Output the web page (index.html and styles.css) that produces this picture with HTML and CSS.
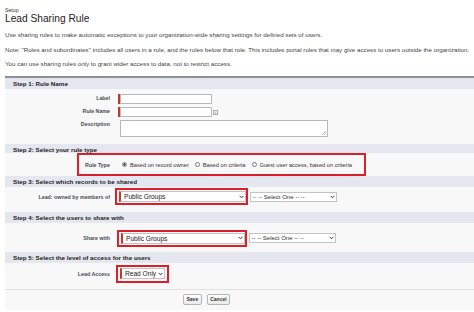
FILE: index.html
```html
<!DOCTYPE html>
<html>
<head>
<meta charset="utf-8">
<title>Lead Sharing Rule</title>
<link rel="stylesheet" href="styles.css">
</head>
<body>
<div class="crumb">Setup</div>
<h1 class="title">Lead Sharing Rule</h1>
<p class="desc">Use sharing rules to make automatic exceptions to your organization-wide sharing settings for defined sets of users.</p>
<p class="desc">Note: "Roles and subordinates" includes all users in a role, and the roles below that role. This includes portal roles that may give access to users outside the organization.</p>
<p class="desc">You can use sharing rules only to grant wider access to data, not to restrict access.</p>

<div class="panel">
  <div class="sec-head">Step 1: Rule Name</div>
  <div class="sec-body s1">
    <div class="row r-label">
      <div class="lbl">Label</div>
      <div class="fld"><span class="req"></span><span class="inp"></span></div>
    </div>
    <div class="row r-name">
      <div class="lbl">Rule Name</div>
      <div class="fld"><span class="req"></span><span class="inp"></span><span class="info">i</span></div>
    </div>
    <div class="row r-desc">
      <div class="lbl">Description</div>
      <div class="fld"><span class="txtarea"><svg class="grip" width="4" height="4" viewBox="0 0 4 4"><path d="M4 0L0 4M4 2L2 4" stroke="#999" stroke-width="0.6"/></svg></span></div>
    </div>
  </div>

  <div class="sec-head">Step 2: Select your rule type</div>
  <div class="sec-body s2">
    <div class="mark type-box">
      <div class="lbl tlbl">Rule Type</div>
      <label class="radio"><span class="dot on"></span>Based on record owner</label>
      <label class="radio"><span class="dot"></span>Based on criteria</label>
      <label class="radio"><span class="dot"></span>Guest user access, based on criteria</label>
    </div>
  </div>

  <div class="sec-head">Step 3: Select which records to be shared</div>
  <div class="sec-body s3">
    <div class="row">
      <div class="lbl">Lead: owned by members of</div>
      <div class="mark sel-box b3"><div class="sel big req-sel w126"><span>Public Groups</span><svg class="chev" width="5" height="4" viewBox="0 0 5 4"><path d="M0.6 0.9L2.5 2.8L4.4 0.9" fill="none" stroke="#222" stroke-width="0.9"/></svg></div></div>
      <div class="sel small w87"><span>-- -- Select One -- --</span><svg class="chev" width="5" height="4" viewBox="0 0 5 4"><path d="M0.6 0.9L2.5 2.8L4.4 0.9" fill="none" stroke="#222" stroke-width="0.9"/></svg></div>
    </div>
  </div>

  <div class="sec-head">Step 4: Select the users to share with</div>
  <div class="sec-body s4">
    <div class="row">
      <div class="lbl">Share with</div>
      <div class="mark sel-box b4"><div class="sel big req-sel w125"><span>Public Groups</span><svg class="chev" width="5" height="4" viewBox="0 0 5 4"><path d="M0.6 0.9L2.5 2.8L4.4 0.9" fill="none" stroke="#222" stroke-width="0.9"/></svg></div></div>
      <div class="sel small w87"><span>-- -- Select One -- --</span><svg class="chev" width="5" height="4" viewBox="0 0 5 4"><path d="M0.6 0.9L2.5 2.8L4.4 0.9" fill="none" stroke="#222" stroke-width="0.9"/></svg></div>
    </div>
  </div>

  <div class="sec-head">Step 5: Select the level of access for the users</div>
  <div class="sec-body s5">
    <div class="row">
      <div class="lbl">Lead Access</div>
      <div class="mark sel-box b5"><div class="sel big req-sel w45"><span>Read Only</span><svg class="chev" width="5" height="4" viewBox="0 0 5 4"><path d="M0.6 0.9L2.5 2.8L4.4 0.9" fill="none" stroke="#222" stroke-width="0.9"/></svg></div></div>
    </div>
  </div>

  <div class="buttons">
    <button class="btn" type="button">Save</button>
    <button class="btn" type="button">Cancel</button>
  </div>
</div>
</body>
</html>
```

FILE: styles.css
```css
html, body {
  margin: 0;
  background: #ffffff;
}
body {
  padding: 7px 0 0 5px;
  font-family: "Liberation Sans", Arial, sans-serif;
  color: #333;
}
.crumb {
  font-size: 5.2px;
  line-height: 6px;
  color: #333;
}
.title {
  margin: 0;
  font-size: 10.2px;
  font-weight: normal;
  line-height: 12px;
  color: #222;
}
.desc {
  margin: 0;
  font-size: 6.2px;
  line-height: 14.5px;
  color: #444;
}
.desc:first-of-type {
  margin-top: 3px;
}
.panel {
  margin-top: 4px;
  border-top: 2px solid #8a8f98;
  background: #f8f8f8;
}
.sec-head {
  height: 11px;
  line-height: 11px;
  padding-left: 8px;
  background: #e4e7ef;
  font-size: 6.25px;
  font-weight: bold;
  color: #222;
}
.sec-body {
  background: #f8f8f8;
  box-sizing: border-box;
}
.s1 { height: 55.5px; padding-top: 5px; }
.s2 { height: 22.5px; padding-left: 72px; }
.s3 { height: 25.5px; padding-top: 1.5px; }
.s4 { height: 28.5px; padding-top: 7px; }
.s5 { height: 26px; padding-top: 2px; }

.row {
  display: flex;
  align-items: center;
}
.lbl {
  width: 105px;
  flex: none;
  text-align: right;
  font-size: 5.3px;
  font-weight: bold;
  color: #4a4a56;
}
.s1 .row { align-items: flex-start; }
.s1 .lbl { padding-top: 1px; }
.fld {
  display: flex;
  align-items: flex-start;
  margin-left: 8px;
}
.r-name { margin-top: 2.5px; }
.r-desc { margin-top: 3px; }
.req {
  width: 2px;
  height: 10.5px;
  background: #c0392b;
}
.inp {
  width: 92px;
  height: 10.5px;
  box-sizing: border-box;
  border: 1px solid #b9b9b9;
  background: #fff;
}
.info {
  margin: 3px 0 0 1px;
  width: 5px;
  height: 5.5px;
  box-sizing: border-box;
  border: 0.6px solid #aaa;
  background: #f2f2f2;
  font-size: 4px;
  line-height: 4.5px;
  text-align: center;
  color: #666;
}
.txtarea {
  display: flex;
  align-items: flex-end;
  justify-content: flex-end;
  margin-left: 2px;
  width: 208px;
  height: 16.5px;
  box-sizing: border-box;
  border: 1px solid #b9b9b9;
  background: #fff;
  padding: 0 1px 1px 0;
}

.mark {
  border: 2px solid #dc1f2b;
  box-sizing: border-box;
}
.type-box {
  display: flex;
  align-items: center;
  width: 289px;
  height: 23px;
  margin-top: -2px;
}
.tlbl {
  width: 31px;
  font-size: 5.3px;
}
.radio {
  display: flex;
  align-items: center;
  font-size: 5.7px;
  color: #333;
  margin-left: 6px;
}
.radio:first-of-type { margin-left: 12px; }
.dot {
  width: 5px;
  height: 5px;
  box-sizing: border-box;
  border-radius: 50%;
  border: 0.7px solid #777;
  background: #fff;
  margin-right: 3px;
}
.dot.on {
  border-color: #888;
  background: radial-gradient(circle, #666 0 1.2px, #f2f2f2 1.5px);
}

.sel-box {
  display: flex;
  align-items: center;
  padding-left: 2px;
}
.b3 { margin-left: 5px; width: 133px; height: 17px; }
.b4 { margin-left: 7px; width: 130px; height: 16.5px; }
.b5 { margin-left: 6px; width: 53px; height: 18px; padding-left: 2px; }
.sel {
  display: flex;
  align-items: center;
  justify-content: space-between;
  box-sizing: border-box;
  border: 1px solid #c3c3c3;
  background: #fff;
  color: #222;
}
.sel.big {
  height: 11px;
  font-size: 6.6px;
  padding: 0 1.5px 0 3px;
}
.req-sel { border-left: 2px solid #c0392b; }
.sel.small {
  height: 10px;
  font-size: 6px;
  padding: 0 1.5px 0 1.5px;
  margin-left: 2px;
  color: #333;
}
.w126 { width: 127px; }
.w125 { width: 125px; }
.w45 { width: 45px; }
.w87 { width: 87px; }
.chev { flex: none; }

.buttons {
  display: flex;
  padding: 4px 0 5px 178px;
  gap: 5px;
  border-top: 1px solid #e0e0e0;
  background: #f8f8f8;
}
.btn {
  height: 11px;
  padding: 0 2.5px;
  border: 1px solid #b5b5b5;
  border-radius: 2px;
  background: linear-gradient(#ffffff, #eaeaea);
  font-family: "Liberation Sans", Arial, sans-serif;
  font-size: 5px;
  font-weight: bold;
  color: #333;
  line-height: 9px;
}
```
